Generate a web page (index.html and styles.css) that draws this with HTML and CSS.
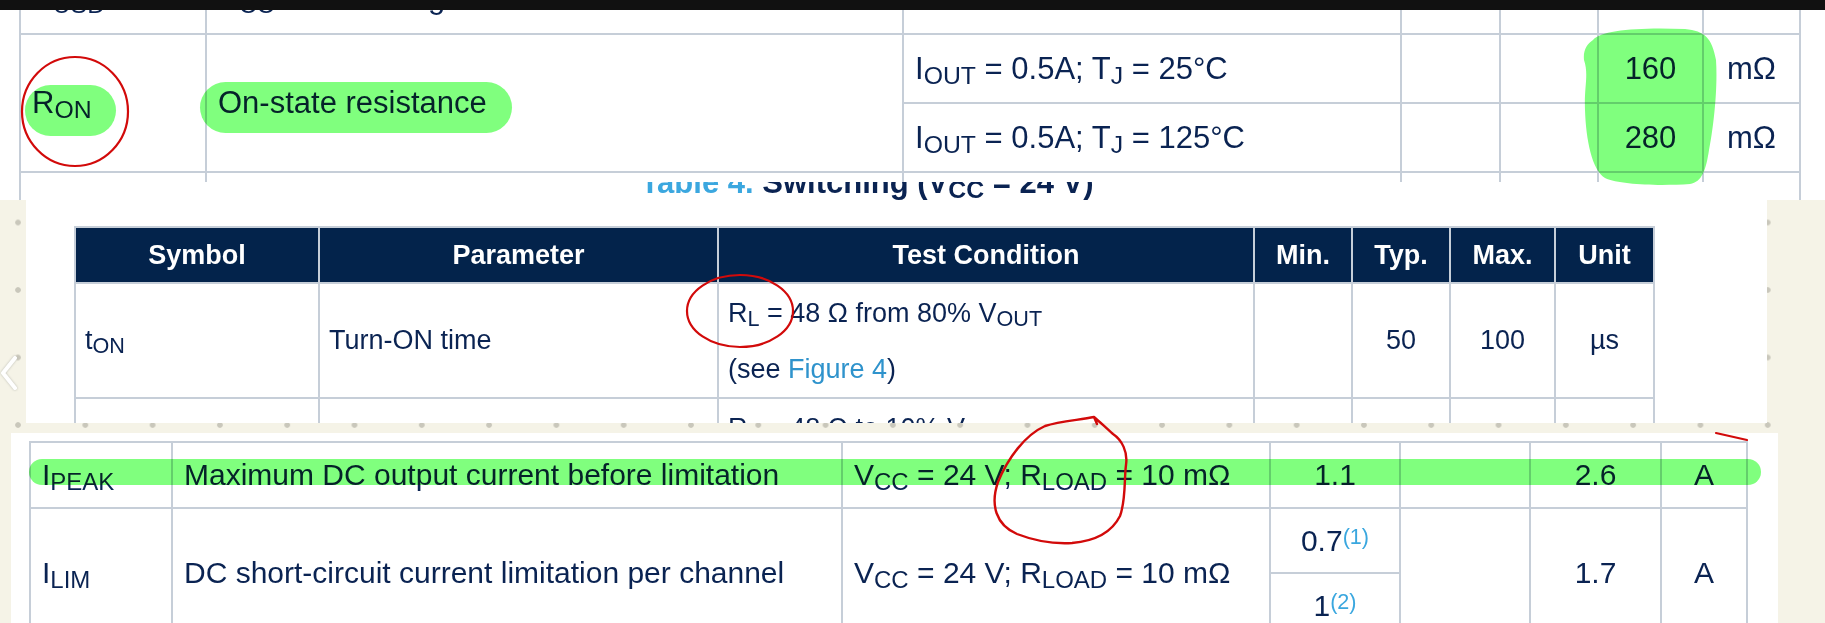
FILE: index.html
```html
<!DOCTYPE html>
<html>
<head>
<meta charset="utf-8">
<title>Datasheet notes</title>
<link rel="stylesheet" href="styles.css">
</head>
<body>
<div class="page">
  <div class="topbar"></div>

  <section class="snip snip-top">
    <table class="dt dt-top">
      <colgroup><col><col><col><col><col><col><col></colgroup>
      <tr class="r-prev">
        <td>V<sub>USD</sub></td>
        <td>V<sub>CC</sub> undervoltage shutdown</td>
        <td></td><td></td><td></td><td></td><td></td>
      </tr>
      <tr class="r-sub">
        <td rowspan="2">R<sub>ON</sub></td>
        <td rowspan="2">On-state resistance</td>
        <td>I<sub>OUT</sub> = 0.5A; T<sub>J</sub> = 25°C</td>
        <td></td><td></td>
        <td class="c">160</td>
        <td class="c">mΩ</td>
      </tr>
      <tr class="r-sub">
        <td>I<sub>OUT</sub> = 0.5A; T<sub>J</sub> = 125°C</td>
        <td></td><td></td>
        <td class="c">280</td>
        <td class="c">mΩ</td>
      </tr>
      <tr class="r-stub"><td></td><td></td><td></td><td></td><td></td><td></td><td></td></tr>
    </table>
  </section>

  <section class="snip snip-mid">
    <div class="tbl-wrap">
      <div class="caption"><span class="tno">Table 4.</span> Switching (V<sub>CC</sub> = 24 V)</div>
      <table class="dt dt-mid">
        <colgroup><col><col><col><col><col><col><col></colgroup>
        <tr class="r-head">
          <th>Symbol</th><th>Parameter</th><th>Test Condition</th><th>Min.</th><th>Typ.</th><th>Max.</th><th>Unit</th>
        </tr>
        <tr class="r-body">
          <td>t<sub>ON</sub></td>
          <td>Turn-ON time</td>
          <td>
            <div class="cond-line">R<sub>L</sub> = 48 Ω from 80% V<sub>OUT</sub></div>
            <div class="cond-line">(see <span class="link">Figure 4</span>)</div>
          </td>
          <td></td>
          <td class="c">50</td>
          <td class="c">100</td>
          <td class="c">µs</td>
        </tr>
        <tr class="r-body">
          <td>t<sub>OFF</sub></td>
          <td>Turn-OFF time</td>
          <td>
            <div class="cond-line">R<sub>L</sub> = 48 Ω to 10% V<sub>OUT</sub></div>
            <div class="cond-line">(see <span class="link">Figure 4</span>)</div>
          </td>
          <td></td><td></td><td></td><td></td>
        </tr>
      </table>
    </div>
  </section>

  <section class="snip snip-bot">
    <table class="dt dt-bot">
      <colgroup><col><col><col><col><col><col><col></colgroup>
      <tr class="r1">
        <td>I<sub>PEAK</sub></td>
        <td>Maximum DC output current before limitation</td>
        <td>V<sub>CC</sub> = 24 V; R<sub>LOAD</sub> = 10 mΩ</td>
        <td class="c">1.1</td>
        <td></td>
        <td class="c">2.6</td>
        <td class="c">A</td>
      </tr>
      <tr class="r2">
        <td rowspan="2">I<sub>LIM</sub></td>
        <td rowspan="2">DC short-circuit current limitation per channel</td>
        <td rowspan="2">V<sub>CC</sub> = 24 V; R<sub>LOAD</sub> = 10 mΩ</td>
        <td class="c">0.7<sup class="note">(1)</sup></td>
        <td rowspan="2"></td>
        <td rowspan="2" class="c">1.7</td>
        <td rowspan="2" class="c">A</td>
      </tr>
      <tr class="r3">
        <td class="c">1<sup class="note">(2)</sup></td>
      </tr>
    </table>
  </section>

  <svg class="chev" width="20" height="40" viewBox="0 0 20 40" aria-hidden="true">
    <polyline points="15,3 3,18 15,33" fill="none" stroke="#ffffff" stroke-width="4" stroke-linecap="round" stroke-linejoin="round"/>
  </svg>

  <svg class="marks marks-green" width="1825" height="623" viewBox="0 0 1825 623" aria-hidden="true">
    <rect x="25" y="85" width="91" height="51" rx="25.5" fill="#80ff7e"/>
    <rect x="200" y="82" width="312" height="51" rx="25.5" fill="#80ff7e"/>
    <path d="M1593,40 C1601,30 1640,27 1685,29 C1705,31 1712,38 1716,60 C1718,90 1713,130 1709,150 C1706,170 1702,182 1690,184 C1660,186 1620,185 1605,178 C1592,170 1586,140 1585,110 C1584,86 1589,75 1584,60 C1583,50 1587,44 1593,40 Z" fill="#80ff7e"/>
    <rect x="29" y="459" width="1732" height="26" rx="13" fill="#80ff7e"/>
  </svg>

  <svg class="marks marks-red" width="1825" height="623" viewBox="0 0 1825 623" aria-hidden="true">
    <ellipse cx="75" cy="111.5" rx="53" ry="54.5" fill="none" stroke="#d20a0a" stroke-width="2.2"/>
    <ellipse cx="740" cy="311" rx="53" ry="36" fill="none" stroke="#d20a0a" stroke-width="2.2"/>
    <path d="M1097,424 L1094,417 C1080,420 1060,421 1045,426 C1025,435 1008,458 998,482 C990,505 996,525 1017,534 C1035,541 1055,544 1072,543 C1095,541 1112,532 1120,516 C1126,500 1124,480 1126,465 C1128,452 1122,440 1113,434 C1106,428 1100,422 1094,417" fill="none" stroke="#d20a0a" stroke-width="2.4" stroke-linecap="round" stroke-linejoin="round"/>
    <path d="M1716,433 L1747,440" fill="none" stroke="#d20a0a" stroke-width="2.2" stroke-linecap="round"/>
  </svg>
</div>
</body>
</html>
```
FILE: styles.css
```css
* { box-sizing: border-box; }

html, body {
  margin: 0;
  padding: 0;
}

body {
  width: 1825px;
  height: 623px;
  overflow: hidden;
  font-family: "Liberation Sans", Arial, sans-serif;
  color: #0a2352;
}

.page {
  position: relative;
  width: 1825px;
  height: 623px;
  overflow: hidden;
  background-color: #f5f3e7;
  background-image: radial-gradient(circle, #c9c7bb 0, #c9c7bb 2.4px, rgba(245,243,231,0) 3.2px);
  background-size: 67.3px 67.5px;
  background-position: -15.65px -13.75px;
}

.topbar {
  height: 10px;
  background: #111111;
}

.snip {
  position: relative;
  background: #ffffff;
  overflow: hidden;
}

.snip-top { height: 190px; }

.snip-mid {
  margin: -18px 0 0 26px;
  width: 1741px;
  height: 241px;
}

.snip-bot {
  margin: 10px 0 0 11px;
  width: 1767px;
  height: 190px;
}

/* tables */
.dt {
  border-collapse: collapse;
  table-layout: fixed;
}

.dt td, .dt th {
  border: 2px solid #c6ced8;
  padding: 0 11px;
  white-space: nowrap;
  vertical-align: middle;
  text-align: left;
  font-weight: normal;
}

.dt .c { text-align: center; }

.dt sub {
  font-size: 0.8em;
  vertical-align: -0.2em;
  line-height: 0;
}

.note {
  color: #3aa7df;
  font-size: 0.72em;
  vertical-align: 0.32em;
  line-height: 0;
}

/* top snippet */
.dt-top {
  font-size: 31px;
  width: 1782px;
  margin: -49px 0 0 19px;
}
.dt-top col:nth-child(1) { width: 186px; }
.dt-top col:nth-child(2) { width: 697px; }
.dt-top col:nth-child(3) { width: 498px; }
.dt-top col:nth-child(4) { width: 99px; }
.dt-top col:nth-child(5) { width: 98px; }
.dt-top col:nth-child(6) { width: 105px; }
.dt-top col:nth-child(7) { width: 97px; }

.dt-top .r-prev { height: 72px; }
.dt-top .r-sub { height: 69px; }
.dt-top .r-stub td {
  height: 32px;
  padding: 0;
  border-bottom: none;
}

/* middle snippet */
.tbl-wrap {
  margin-left: 48px;
  width: 1581px;
}

.caption {
  margin-top: -15px;
  height: 31px;
  line-height: 31px;
  font-size: 31px;
  font-weight: bold;
  white-space: nowrap;
  text-align: center;
  padding-left: 5px;
  color: #0a2352;
}

.caption sub {
  font-size: 0.8em;
  vertical-align: -0.2em;
  line-height: 0;
}

.caption .tno { color: #3ba7df; }

.dt-mid {
  font-size: 27px;
  width: 1581px;
  margin-top: 28px;
}
.dt-mid col:nth-child(1) { width: 244px; }
.dt-mid col:nth-child(2) { width: 399px; }
.dt-mid col:nth-child(3) { width: 536px; }
.dt-mid col:nth-child(4) { width: 98px; }
.dt-mid col:nth-child(5) { width: 98px; }
.dt-mid col:nth-child(6) { width: 105px; }
.dt-mid col:nth-child(7) { width: 99px; }

.dt-mid td { padding: 0 9px; }

.dt-mid th {
  background: #03234b;
  color: #ffffff;
  font-weight: bold;
  text-align: center;
  padding: 0 4px;
}

.dt-mid .r-head { height: 56px; }
.dt-mid .r-body { height: 115px; }

.cond-line { line-height: 56px; }

.link { color: #2f93cc; }

/* bottom snippet */
.dt-bot {
  font-size: 30px;
  width: 1719px;
  margin: 8px 0 0 18px;
}
.dt-bot col:nth-child(1) { width: 142px; }
.dt-bot col:nth-child(2) { width: 670px; }
.dt-bot col:nth-child(3) { width: 428px; }
.dt-bot col:nth-child(4) { width: 130px; }
.dt-bot col:nth-child(5) { width: 130px; }
.dt-bot col:nth-child(6) { width: 131px; }
.dt-bot col:nth-child(7) { width: 86px; }

.dt-bot .r1 { height: 66px; }
.dt-bot .r2, .dt-bot .r3 { height: 65px; }

/* overlays */
.chev {
  position: absolute;
  left: 0;
  top: 355px;
  filter: drop-shadow(0 0 1px #b9b9b0);
}

.marks {
  position: absolute;
  left: 0;
  top: 0;
  pointer-events: none;
}

.marks-green { mix-blend-mode: multiply; }
```
